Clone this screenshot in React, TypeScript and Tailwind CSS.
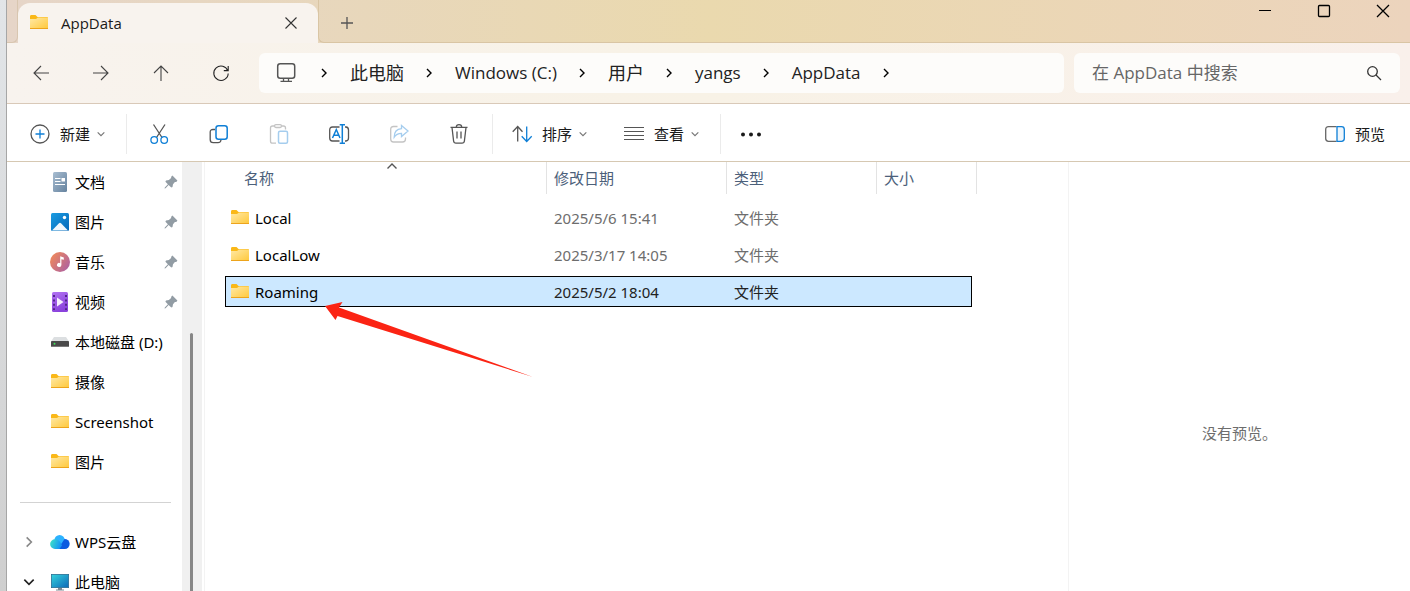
import type { ReactNode } from 'react'

const FOLDER_ROWS = [
  { name: 'Local', modified: '2025/5/6 15:41', type: '文件夹', selected: false },
  { name: 'LocalLow', modified: '2025/3/17 14:05', type: '文件夹', selected: false },
  { name: 'Roaming', modified: '2025/5/2 18:04', type: '文件夹', selected: true },
]

const FolderIcon = () => (
  <svg className="h-5 w-5 shrink-0" viewBox="0 0 20 20">
    <defs>
      <linearGradient id="folder" x1="0" y1="0" x2="1" y2="1">
        <stop offset="0" stopColor="#ffe9a6" />
        <stop offset="1" stopColor="#ffc83a" />
      </linearGradient>
    </defs>
    <path d="M1 3.5Q1 2 2 2H6.5L8.5 4H18Q19 4 19 5V9H1Z" fill="#fab818" />
    <path d="M1 6H7L9 4.6H19V15Q19 16 18 16H2Q1 16 1 15Z" fill="url(#folder)" />
    <path d="M1 15.5H19" stroke="#eda41c" />
  </svg>
)

const DocumentIcon = () => (
  <svg className="h-5 w-5 shrink-0" viewBox="0 0 20 20">
    <defs>
      <linearGradient id="doc" x1="0" y1="0" x2="1" y2="1">
        <stop offset="0" stopColor="#a8bdd1" />
        <stop offset="1" stopColor="#66839f" />
      </linearGradient>
    </defs>
    <rect x="3" width="14" height="20" rx="1.5" fill="url(#doc)" />
    <path d="M5 6.5H10.5M5 9.5H10.5M5 12.5H15" stroke="#fff" strokeWidth="1.2" />
    <rect x="11.5" y="6" width="3.5" height="3.5" fill="#fff" />
  </svg>
)

const PictureIcon = () => (
  <svg className="h-5 w-5 shrink-0" viewBox="0 0 20 20">
    <defs>
      <linearGradient id="picture" x1="0" y1="0" x2="1" y2="1">
        <stop offset="0" stopColor="#1b9de2" />
        <stop offset="1" stopColor="#0567b8" />
      </linearGradient>
    </defs>
    <rect x="1" y="1" width="18" height="18" rx="1.5" fill="url(#picture)" />
    <path d="M2 18.5L9 11.2Q10 10.3 11 11.2L18 18.5Z" fill="#f2f7fc" />
    <circle cx="14.5" cy="5.5" r="1.7" fill="#fff" />
  </svg>
)

const MusicIcon = () => (
  <svg className="h-5 w-5 shrink-0" viewBox="0 0 20 20">
    <defs>
      <linearGradient id="music" x1="0" y1="0.2" x2="1" y2="0.9">
        <stop offset="0" stopColor="#f0895a" />
        <stop offset="1" stopColor="#a95fa6" />
      </linearGradient>
    </defs>
    <circle cx="10" cy="10" r="10" fill="url(#music)" />
    <path d="M10.2 4.2L13.8 5.4V7.8L11.4 7.2V13A2.2 2 0 1 1 10.2 11.2Z" fill="#fff" />
  </svg>
)

const VideoIcon = () => (
  <svg className="h-5 w-5 shrink-0" viewBox="0 0 20 20">
    <defs>
      <linearGradient id="video" x1="0" y1="0" x2="0.4" y2="1">
        <stop offset="0" stopColor="#b273f2" />
        <stop offset="1" stopColor="#8a42dc" />
      </linearGradient>
    </defs>
    <rect x="2" width="16" height="20" rx="1.5" fill="url(#video)" />
    <path d="M4 3V18M16 3V18" stroke="#4a2380" strokeWidth="1.8" strokeDasharray="2 2.4" />
    <path d="M7 5.5L13.5 10L7 14.5Z" fill="#f5effc" />
  </svg>
)

const DriveIcon = () => (
  <svg className="h-5 w-5 shrink-0" viewBox="0 0 20 20">
    <path d="M4 5H16L19 9.5H1Z" fill="#dcdfe1" />
    <rect x="1" y="9" width="18" height="6" rx="0.8" fill="#4a4a4a" />
    <path d="M1 14.5H19" stroke="#7a7a7a" />
    <circle cx="4.5" cy="11.8" r="1" fill="#3fe05a" />
  </svg>
)

const CloudIcon = () => (
  <svg className="h-5 w-5 shrink-0" viewBox="0 0 20 20">
    <defs>
      <linearGradient id="cloud" x1="0" y1="0" x2="1" y2="0.3">
        <stop offset="0" stopColor="#3fe6c4" />
        <stop offset="1" stopColor="#1593f5" />
      </linearGradient>
    </defs>
    <circle cx="9.6" cy="8.2" r="5.2" fill="#2cb2ff" />
    <path d="M8 17L14.5 7A5 5 0 0 1 14.8 17Z" fill="#0b5be0" />
    <path d="M5 7.2A4.9 4.9 0 0 0 5 17H9.5L12 13.5C10.5 9.5 8.5 7.2 5 7.2Z" fill="url(#cloud)" />
  </svg>
)

const ComputerIcon = () => (
  <svg className="h-5 w-5 shrink-0" viewBox="0 0 20 20">
    <defs>
      <linearGradient id="screen" x1="0" y1="0" x2="1" y2="1">
        <stop offset="0" stopColor="#35d3dc" />
        <stop offset="1" stopColor="#0c68b8" />
      </linearGradient>
    </defs>
    <rect x="1.4" y="2.4" width="17.2" height="13.2" fill="url(#screen)" stroke="#2a6f93" strokeWidth="0.8" />
    <path d="M8 16H12V17.5H14V18.6H6V17.5H8Z" fill="#7d8a94" />
  </svg>
)

const PinIcon = () => (
  <svg className="h-3.5 w-3.5 shrink-0" viewBox="0 0 14 14" fill="#929ca4">
    <path d="M8.4 0.6L13.4 5.4L12.3 6.9L10.9 7L9 9.2L8.5 12.1L7.3 12.6L4.6 10L1.6 13.2L0.5 13.5L0.8 12.4L3.9 9.3L1.4 6.7L2 5.4L4.9 5L7.1 3.1L7.2 1.7Z" />
  </svg>
)

const Chevron = ({ className, d = 'M4 2L8 6L4 10' }: { className: string; d?: string }) => (
  <svg className={className} viewBox="0 0 12 12" fill="none" stroke="currentColor" strokeWidth={1.4}>
    <path d={d} />
  </svg>
)

const DOWN = 'M2 4L6 8L10 4'

/* 24px line icons shared by the title, address and command bars */
const LineIcon = ({ children, className = '' }: { children: ReactNode; className?: string }) => (
  <svg
    className={`h-6 w-6 shrink-0 ${className}`}
    viewBox="0 0 24 24"
    fill="none"
    stroke="currentColor"
    strokeWidth={1.3}
  >
    {children}
  </svg>
)

const TitleBar = () => (
  <header className="flex h-[43px] shrink-0 bg-linear-to-r from-[#e6d5c8] via-[#ead9ae] to-[#ecd4bd]">
    <div className="w-[11px] rounded-br-md border-r border-b border-[#d8c6b0]" />
    <div className="flex pt-[3px]">
      <div className="flex w-[300px] items-center rounded-t-xl bg-[#f8f3ee] pr-[15px] pl-[11px]">
        <FolderIcon />
        <span className="ml-3 flex-1 font-['Open_Sans'] text-[15px] font-medium text-[#1a1a1a]">AppData</span>
        <button aria-label="关闭标签页" className="text-[#333]">
          <LineIcon>
            <path d="M6.5 6.5L17.5 17.5M17.5 6.5L6.5 17.5" strokeWidth={1.1} />
          </LineIcon>
        </button>
      </div>
    </div>
    <div className="flex flex-1 justify-between rounded-bl-md border-b border-l border-[#d9c5a4]">
      <button aria-label="新建标签页" className="mt-1 ml-4 self-center text-[#555]">
        <LineIcon>
          <path d="M12 6V18M6 12H18" />
        </LineIcon>
      </button>
      <div className="flex h-[22px] items-center gap-[35px] pr-[15px] text-black">
        <button aria-label="最小化">
          <LineIcon>
            <path d="M6 11.5H18" strokeWidth={1} />
          </LineIcon>
        </button>
        <button aria-label="最大化">
          <LineIcon>
            <rect x="6.5" y="6.5" width="11" height="11" rx="1" />
          </LineIcon>
        </button>
        <button aria-label="关闭">
          <LineIcon>
            <path d="M6 6L18 18M18 6L6 18" />
          </LineIcon>
        </button>
      </div>
    </div>
  </header>
)

const Crumb = ({ label, size = 'text-[17px]' }: { label: string; size?: string }) => (
  <li className="flex items-center">
    <a href="#" className={`pr-[19px] pl-5 leading-6 text-[#222] ${size}`}>
      {label}
    </a>
    <Chevron className="h-3 w-3" />
  </li>
)

const AddressBar = () => (
  <div className="flex h-[61px] shrink-0 items-center border-b border-[#d9c9b8] bg-linear-to-r from-[#f8f3ee] via-[#f8f2e6] to-[#f9f0eb] font-['Open_Sans','Noto_Sans_CJK_SC',sans-serif]">
    <div className="flex gap-9 pl-[22px] text-[#444]">
      <button aria-label="后退">
        <LineIcon>
          <path d="M20 12H5M12 5L5 12L12 19" strokeWidth={1.1} />
        </LineIcon>
      </button>
      <button aria-label="前进">
        <LineIcon>
          <path d="M4 12H19M12 5L19 12L12 19" strokeWidth={1.1} />
        </LineIcon>
      </button>
      <button aria-label="向上">
        <LineIcon>
          <path d="M12 20V5M5 12L12 5L19 12" strokeWidth={1.1} />
        </LineIcon>
      </button>
      <button aria-label="刷新">
        <LineIcon className="text-[#222]">
          <path d="M18.8 9.8A7.2 7.2 0 1 0 19.2 12.5M19.2 5V9.6H14.8" strokeWidth={1.1} />
        </LineIcon>
      </button>
    </div>

    <nav className="ml-[26px] flex h-10 flex-1 items-center rounded-md bg-[#fdfcfa] pl-[15px]">
      <LineIcon className="mr-5 text-[#555]">
        <rect x="3.7" y="2.7" width="17" height="14.6" rx="2.5" strokeWidth={1.5} />
        <path d="M9.5 17.5V20M14.5 17.5V20M6.5 20.3H18" strokeWidth={1.3} />
      </LineIcon>
      <Chevron className="h-3 w-3" />
      <ol className="flex">
        <Crumb label="此电脑" size="text-lg" />
        <Crumb label="Windows (C:)" />
        <Crumb label="用户" size="text-lg" />
        <Crumb label="yangs" />
        <Crumb label="AppData" />
      </ol>
    </nav>

    <label className="mr-2.5 ml-2.5 flex h-10 w-[326px] items-center rounded-md bg-[#fdfcfa] pr-3.5 pl-[18px]">
      <input
        type="text"
        aria-label="搜索"
        placeholder="在 AppData 中搜索"
        className="min-w-0 flex-1 bg-transparent text-[17px] leading-6 outline-none placeholder:text-[#666]"
      />
      <LineIcon className="text-[#333]">
        <circle cx="10.5" cy="10.5" r="4.8" />
        <path d="M14 14L19 19" />
      </LineIcon>
    </label>
  </div>
)

const Divider = () => <div className="h-10 w-px bg-[#ebebeb]" />

const CommandBar = () => (
  <div className="flex h-[58px] shrink-0 items-center border-b border-[#d6c8b2] bg-white pt-[3px] pr-[25px] text-[15px] text-[#1a1a1a]">
    <button className="flex items-center pr-5 pl-[21px]">
      <LineIcon className="text-[#555]">
        <circle cx="12" cy="12" r="9" />
        <path d="M12 7.5V16.5M7.5 12H16.5" stroke="#0f7fd6" />
      </LineIcon>
      <span className="ml-2">新建</span>
      <Chevron className="ml-1.5 h-2.5 w-2.5 text-[#777]" d={DOWN} />
    </button>
    <Divider />
    <div className="flex gap-9 pr-[21px] pl-5 text-[#555]">
      <button aria-label="剪切">
        <LineIcon>
          <path d="M6.5 2.5L15 15.5M18 2.5L9.5 15.5" />
          <g stroke="#0f7fd6">
            <circle cx="7.2" cy="18" r="3.3" />
            <circle cx="17.2" cy="18" r="3.3" />
          </g>
        </LineIcon>
      </button>
      <button aria-label="复制">
        <LineIcon>
          <path d="M8 7.5H6Q3.2 7.5 3.2 10V17.5Q3.2 20.7 6.2 20.7H11Q13.5 20.7 14 18" />
          <rect x="9" y="3.7" width="11.2" height="13.6" rx="2.5" stroke="#0f7fd6" strokeWidth={1.5} />
        </LineIcon>
      </button>
      <button aria-label="粘贴" disabled>
        <LineIcon className="text-[#c4c4c4]">
          <path d="M9 21.2H5.5Q3.5 21.2 3.5 19.2V6Q3.5 4 5.5 4H7.5M14.5 4H16.5Q18.5 4 18.5 6V7.5" />
          <rect x="7.5" y="2.7" width="7" height="2.8" rx="1.4" />
          <rect x="11.5" y="9.3" width="9" height="12" rx="1.5" stroke="#a5cdee" strokeWidth={1.5} />
        </LineIcon>
      </button>
      <button aria-label="重命名">
        <LineIcon>
          <path d="M12.5 5H5.5Q2.7 5 2.7 8V16Q2.7 19 5.5 19H12.5M18 5H19Q21.5 5.2 21.5 8V16Q21.5 18.8 19 19H18" />
          <path d="M5.5 16L9.3 7.5L13 16M6.8 13.2H11.7M15.3 2.8V21.2M12.7 2.8H18M12.7 21.2H18" stroke="#0f7fd6" strokeWidth={1.5} />
        </LineIcon>
      </button>
      <button aria-label="共享" disabled>
        <LineIcon className="text-[#c4c4c4]">
          <path d="M10.5 4.5H6.5Q3.7 4.5 3.7 7.3V17Q3.7 20 6.5 20H15.5Q18.5 20 18.5 17V15.5" />
          <path d="M14.5 3.5L21 9L14.5 14.5V11.3Q9.5 11.3 7.2 15.2Q7.2 7.2 14.5 6.7Z" stroke="#a5cdee" />
        </LineIcon>
      </button>
      <button aria-label="删除">
        <LineIcon>
          <path d="M3.5 5.3H20.5M9.3 5Q9.3 2.6 12 2.6Q14.7 2.6 14.7 5M5 5.5L6.6 19Q6.9 21.2 9 21.2H15Q17.1 21.2 17.4 19L19 5.5M10 9.5V16.5M14 9.5V16.5" />
        </LineIcon>
      </button>
    </div>
    <Divider />
    <button className="flex items-center pl-[17px]">
      <LineIcon className="text-[#555]">
        <path d="M7.7 19.5V4.5M2.7 9.7L7.7 4.5L12.5 9.7" />
        <path d="M16.7 4.5V19.5M11.7 14.3L16.7 19.5L21.7 14.3" stroke="#0f7fd6" />
      </LineIcon>
      <span className="ml-2">排序</span>
      <Chevron className="ml-1.5 h-2.5 w-2.5 text-[#777]" d={DOWN} />
    </button>
    <button className="flex items-center pr-5 pl-[34px]">
      <LineIcon className="text-[#555]">
        <path d="M2 5.5H22M2 9.5H22M2 13.5H22M2 17.5H22" strokeWidth={1} />
      </LineIcon>
      <span className="ml-2">查看</span>
      <Chevron className="ml-1.5 h-2.5 w-2.5 text-[#777]" d={DOWN} />
    </button>
    <Divider />
    <button aria-label="更多" className="ml-[18px]">
      <LineIcon>
        <g fill="currentColor" stroke="none">
          <circle cx="4" cy="12.5" r="2" />
          <circle cx="12" cy="12.5" r="2" />
          <circle cx="20" cy="12.5" r="2" />
        </g>
      </LineIcon>
    </button>
    <button className="ml-auto flex items-center">
      <LineIcon className="text-[#666]">
        <path d="M13.5 4.7H5.5Q2.7 4.7 2.7 7.5V16.5Q2.7 19.3 5.5 19.3H13.5" />
        <path d="M14 4.7H18.5Q21.3 4.7 21.3 7.5V16.5Q21.3 19.3 18.5 19.3H14Z" fill="#eef6fc" stroke="#0f7fd6" />
      </LineIcon>
      <span className="ml-2">预览</span>
    </button>
  </div>
)

type NavItemProps = {
  icon: ReactNode
  label: string
  pinned?: boolean
  arrow?: ReactNode
}

const NavItem = ({ icon, label, pinned, arrow }: NavItemProps) => (
  <li className="flex h-10 shrink-0 items-center pr-1 pl-[15px]">
    <span className="flex w-7">{arrow}</span>
    <a href="#" className="flex flex-1 items-center gap-[5px] text-[15px] whitespace-nowrap text-black">
      {icon}
      {label}
    </a>
    {pinned && <PinIcon />}
  </li>
)

const Sidebar = () => (
  <aside className="flex w-[198px] shrink-0 border-r border-[#f3f3f3]">
    <ul className="w-[175px] overflow-hidden">
      <NavItem icon={<DocumentIcon />} label="文档" pinned />
      <NavItem icon={<PictureIcon />} label="图片" pinned />
      <NavItem icon={<MusicIcon />} label="音乐" pinned />
      <NavItem icon={<VideoIcon />} label="视频" pinned />
      <NavItem icon={<DriveIcon />} label="本地磁盘 (D:)" />
      <NavItem icon={<FolderIcon />} label="摄像" />
      <NavItem icon={<FolderIcon />} label="Screenshot" />
      <NavItem icon={<FolderIcon />} label="图片" />
      <li className="flex h-10 items-center pr-[11px] pl-[13px]">
        <hr className="w-full border-[#d3d3d3]" />
      </li>
      <NavItem
        icon={<CloudIcon />}
        label="WPS云盘"
        arrow={<Chevron className="h-3.5 w-3.5 text-[#888]" />}
      />
      <NavItem
        icon={<ComputerIcon />}
        label="此电脑"
        arrow={<Chevron className="h-3.5 w-3.5 text-[#222]" d={DOWN} />}
      />
    </ul>
    <div className="flex w-5 bg-[#f0f0f0] pt-[171px] pl-2">
      <div className="w-[3px] rounded-t-full bg-[#868686]" />
    </div>
  </aside>
)

const HeadCell = ({ label }: { label: string }) => (
  <th scope="col" className="h-8 border-r border-[#e3e3e3] pl-[7px] text-left font-normal">
    {label}
  </th>
)

const FileList = () => (
  <main className="relative min-w-0 flex-1 pl-5">
    <table className="w-[752px] table-fixed border-separate border-spacing-0 text-[15px] leading-6">
      <colgroup>
        <col className="w-[322px]" />
        <col className="w-[180px]" />
        <col className="w-[150px]" />
        <col className="w-[100px]" />
      </colgroup>
      <thead className="text-[#4c607a]">
        <tr>
          <th scope="col" className="relative border-r border-[#e3e3e3] pl-[19px] text-left font-normal">
            名称
            <Chevron className="absolute -top-px left-[161px] h-3 w-3 text-[#555]" d="M1.5 7.5L6 3L10.5 7.5" />
          </th>
          <HeadCell label="修改日期" />
          <HeadCell label="类型" />
          <HeadCell label="大小" />
        </tr>
      </thead>
    </table>
    <FileRows />
    <AnnotationArrow />
  </main>
)

const FileRows = () => (
  <table className="mt-0.5 w-[747px] table-fixed border-separate border-spacing-x-0 border-spacing-y-1.5 text-[15px] leading-6">
    <colgroup>
      <col className="w-[322px]" />
      <col className="w-[180px]" />
      <col />
    </colgroup>
    <tbody>
      {FOLDER_ROWS.map((row) => (
        <tr
          key={row.name}
          aria-selected={row.selected}
          className={
            row.selected
              ? 'bg-[#cce8ff] text-[#222] outline-1 -outline-offset-1 outline-black'
              : 'text-[#6d6d6d]'
          }
        >
          <td className="h-[31px] pl-[5px]">
            <span className="flex items-center gap-[5px] text-black">
              <FolderIcon />
              {row.name}
            </span>
          </td>
          <td className="pl-[7px]">{row.modified}</td>
          <td className="pl-[7px]">{row.type}</td>
        </tr>
      ))}
    </tbody>
  </table>
)

/* Red pointer laid over the list, aimed at the Roaming folder */
const AnnotationArrow = () => (
  <svg className="absolute top-[139px] left-[118px] h-20 w-[212px]" viewBox="0 0 212 80" fill="#fb2414">
    <path d="M2 5L19.5 1L16 6.5L210 76L14.5 15L12.5 19Z" />
  </svg>
)

const PreviewPane = () => (
  <aside className="flex w-[342px] shrink-0 items-center justify-center border-l border-[#f3f3f3] pt-[114px] text-[15px] text-[#6d6d6d]">
    <p>没有预览。</p>
  </aside>
)

export default function App() {
  return (
    <div className="flex h-screen overflow-hidden bg-linear-to-b from-[#e2e5e8] to-[#cfcfcf] pl-1.5 font-['Noto_Sans','Noto_Sans_CJK_SC',sans-serif]">
      <div className="flex min-w-0 flex-1 flex-col border-l border-[#a6a6a6] bg-white">
        <TitleBar />
        <AddressBar />
        <CommandBar />
        <div className="flex min-h-0 flex-1">
          <Sidebar />
          <FileList />
          <PreviewPane />
        </div>
      </div>
    </div>
  )
}
